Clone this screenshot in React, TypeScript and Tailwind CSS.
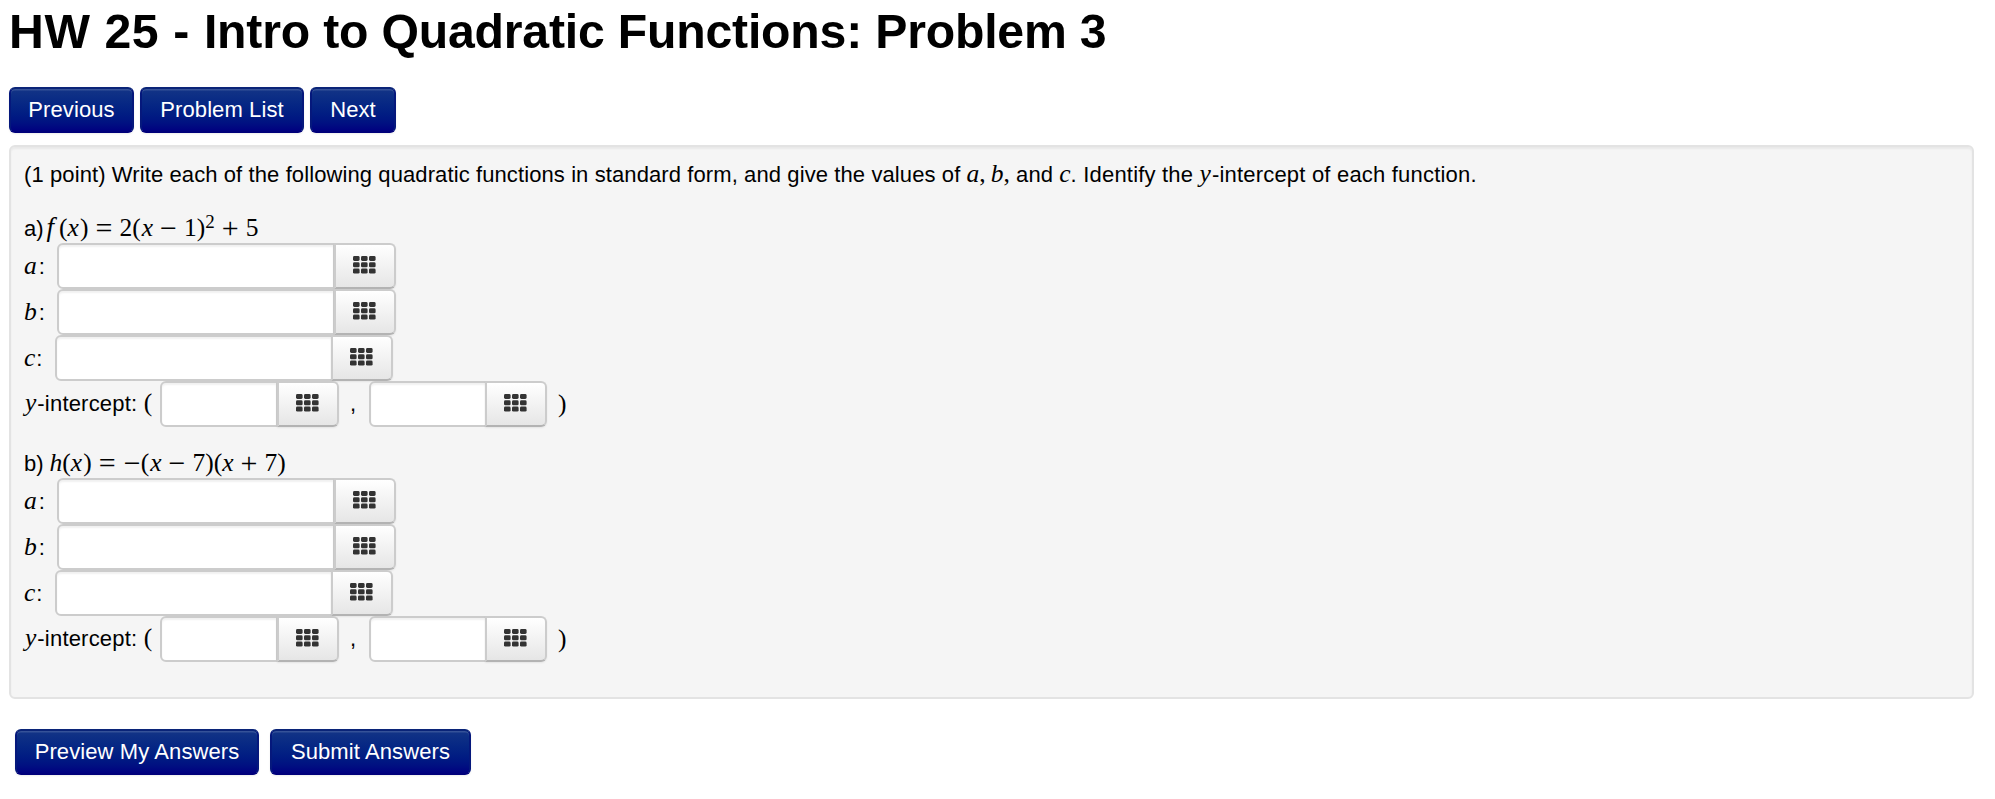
import React from "react";

interface ChildrenInterface {
    children?: React.ReactNode;
    className?: string;
}

interface AnswerBoxInterface {
    className?: string;
    btnClassName?: string;
}

const Button = ({ children, className = "" }: ChildrenInterface) => (
    <button
        type="button"
        className={`h-[46px] pb-[1px] rounded-[6px] border-2 border-[#05187c] border-t-[#0a2478] border-b-[#00007a] bg-gradient-to-b from-[#133486] to-[#000080] text-white text-[22px] leading-none tracking-[0.1px] whitespace-nowrap shadow-[inset_0_1.5px_0_rgba(255,255,255,0.15),0_1px_2px_rgba(0,0,0,0.08)] ${className}`}
    >
        {children}
    </button>
);

const Var = ({ children, className = "" }: ChildrenInterface) => (
    <i className={`font-['Liberation_Serif',serif] text-[25.5px] leading-none tracking-normal ${className}`}>{children}</i>
);

const Num = ({ children, className = "" }: ChildrenInterface) => (
    <span className={`font-['Liberation_Serif',serif] text-[25.5px] leading-none tracking-normal ${className}`}>{children}</span>
);

const Op = ({ children, className = "" }: ChildrenInterface) => (
    <span className={`relative top-[2px] inline-block w-[17px] text-center font-['Liberation_Serif',serif] text-[30px] leading-[20px] tracking-normal ${className}`}>{children}</span>
);

const GridIcon = () => (
    <svg width="23" height="18" viewBox="0 0 23 18" fill="#333">
        {[0, 6.3, 12.6].map((y) =>
            [0, 8, 16].map((x) => <rect key={`${x}-${y}`} x={x} y={y} width="6.6" height="5" rx="1.4" />)
        )}
    </svg>
);

const AnswerBox = ({ className = "", btnClassName = "" }: AnswerBoxInterface) => (
    <div className="flex h-[46px]">
        <input
            type="text"
            className={`h-[46px] rounded-l-[6px] border-2 border-[#ccc] bg-white shadow-[inset_0_2px_2px_rgba(0,0,0,0.06)] outline-none ${className}`}
        />
        <button
            type="button"
            className={`flex h-[46px] w-[62px] items-start justify-center rounded-r-[6px] border-2 border-[#ccc] border-b-[#b3b3b3] bg-gradient-to-b from-white to-[#e6e6e6] pr-[1px] pt-[11px] shadow-[0_1px_2px_rgba(0,0,0,0.07)] ${btnClassName}`}
        >
            <GridIcon />
        </button>
    </div>
);

const AnswerRows = () => (
    <>
        <div className="flex h-[46px] items-center">
            <div className="w-[33px] pt-[1px] whitespace-nowrap"><Var>a</Var><span className="ml-[2px]">:</span></div>
            <AnswerBox className="w-[278px]" btnClassName="-ml-[1px]" />
        </div>
        <div className="flex h-[46px] items-center">
            <div className="w-[33px] pt-[1px] whitespace-nowrap"><Var>b</Var><span className="ml-[2px]">:</span></div>
            <AnswerBox className="w-[278px]" btnClassName="-ml-[1px]" />
        </div>
        <div className="flex h-[46px] items-center">
            <div className="w-[31px] pt-[1px] whitespace-nowrap"><Var>c</Var><span className="ml-[1px]">:</span></div>
            <AnswerBox className="w-[278px]" btnClassName="-ml-[2px]" />
        </div>
        <div className="flex h-[46px] items-center">
            <div className="w-[136px] pl-[1px] whitespace-nowrap"><Var className="mr-[1px]">y</Var><span className="tracking-[0.2px]">-intercept: </span><Num>(</Num></div>
            <AnswerBox className="w-[118px]" btnClassName="-ml-[1px]" />
            <div className="w-[30px] pl-[11px]">,</div>
            <AnswerBox className="w-[118px]" btnClassName="-ml-[2px]" />
            <Num className="ml-[11px]">)</Num>
        </div>
    </>
);

export default function App() {
    return (
        <div className="min-h-[799px] bg-white pl-[9px] pr-[21px] font-['Liberation_Sans',Arial,sans-serif] text-[22px] leading-[30px] text-black">
            <h1 className="h-[87px] pt-[1px] text-[48.2px] font-bold leading-[60px] tracking-[-0.2px] whitespace-nowrap">
                <span className="tracking-[0.6px]">HW 25 - </span>Intro to Quadratic Functions: Problem 3
            </h1>
            <div className="flex gap-[6px]">
                <Button className="w-[125px]">Previous</Button>
                <Button className="w-[164px]">Problem List</Button>
                <Button className="w-[86px]">Next</Button>
            </div>

            <div className="mt-[12px] h-[554px] rounded-[6px] border-2 border-[#e3e3e3] bg-[#f5f5f5] pl-[13px] pt-[13px] shadow-[inset_0_2px_2px_rgba(0,0,0,0.05)]">
                <p className="h-[30px] tracking-[0.1px] whitespace-nowrap">
                    (1 point) Write each of the following quadratic functions in standard form, and give the values of{" "}
                    <Var>a</Var><Num>,</Num><Var className="ml-[5px]">b</Var><Num>,</Num> and <Var>c</Var>
                    <span className="tracking-[0.2px]">. Identify the{" "}
                    <Var className="mr-[1px]">y</Var>-intercept of each function.</span>
                </p>

                <div className="mt-[24px] h-[29px] whitespace-nowrap">
                    a)<Var className="ml-[3px] text-[27px]!">f</Var><Num className="ml-[5px]">(</Num><Var>x</Var><Num className="ml-[1px]">)</Num>
                    <Op className="ml-[7px]">=</Op>
                    <Num className="ml-[7px]">2(</Num><Var className="ml-[1px]">x</Var>
                    <Op className="mx-[7px]">−</Op>
                    <Num>1)</Num>
                    <Num className="relative -top-[8px] text-[19px]!">2</Num>
                    <Op className="mx-[7px]">+</Op>
                    <Num>5</Num>
                </div>
                <AnswerRows />

                <div className="mt-[22px] h-[29px] whitespace-nowrap">
                    b)<Var className="ml-[6px]">h</Var><Num>(</Num><Var>x</Var><Num className="ml-[1px]">)</Num>
                    <Op className="ml-[7px]">=</Op>
                    <Op className="ml-[8px]">−</Op>
                    <Num>(</Num><Var className="ml-[1px]">x</Var>
                    <Op className="mx-[7px]">−</Op>
                    <Num>7)(</Num><Var>x</Var>
                    <Op className="mx-[7px]">+</Op>
                    <Num>7)</Num>
                </div>
                <AnswerRows />
            </div>

            <div className="mt-[30px] ml-[6px] flex gap-[11px]">
                <Button className="w-[244px]">Preview My Answers</Button>
                <Button className="w-[201px]">Submit Answers</Button>
            </div>
        </div>
    );
}
